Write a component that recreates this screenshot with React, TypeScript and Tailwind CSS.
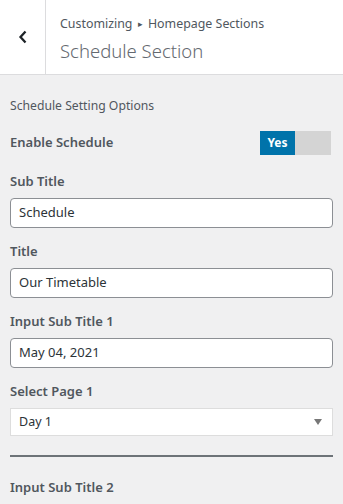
import React from "react";

const font = { fontFamily: '"Noto Sans", "Open Sans", sans-serif' };

function Field({ label, value }: { label: string; value: string }) {
  return (
    <div className="flex flex-col">
      <div className="text-[13px] font-semibold text-[#50575e] leading-[20px] mb-[7px]">{label}</div>
      <div className="h-[30px] rounded-[4px] border border-[#8c8f94] bg-white px-[8px] flex items-center text-[13px] text-[#2c3338]">
        {value}
      </div>
    </div>
  );
}

export default function App() {
  return (
    <div className="w-[343px] h-[504px] overflow-hidden bg-[#f0f0f1]" style={font}>
      <div className="h-[75px] bg-white border-b border-[#dcdcde] flex">
        <div className="w-[46px] border-r border-[#dcdcde] flex items-center justify-center">
          <svg width="10" height="14" viewBox="0 0 10 14">
            <path d="M7.5 1.5 L2.5 7 L7.5 12.5" fill="none" stroke="#1d2327" strokeWidth="2.3" />
          </svg>
        </div>
        <div className="flex flex-col pl-[14px] pt-[14px]">
          <div className="text-[12.4px] text-[#50575e] leading-[20px]">
            Customizing <span className="text-[9px] relative top-[-1px] mx-[2px]">▸</span> Homepage Sections
          </div>
          <div className="text-[18.5px] font-light text-[#646970] leading-[28px] mt-[2px]">Schedule Section</div>
        </div>
      </div>
      <div className="px-[10px] pt-[22px] flex flex-col">
        <div className="text-[12.2px] text-[#50575e] leading-[18px]">Schedule Setting Options</div>
        <div className="flex items-center justify-between mt-[16px]">
          <div className="text-[13px] font-semibold text-[#50575e]">Enable Schedule</div>
          <div className="flex w-[71px] h-[24px] mr-[2px]">
            <div className="w-[35px] bg-[#0073aa] text-white text-[12px] font-bold flex items-center justify-center">Yes</div>
            <div className="flex-1 bg-[#d4d4d4]" />
          </div>
        </div>
        <div className="mt-[16px] flex flex-col gap-[13px]">
          <Field label="Sub Title" value="Schedule" />
          <Field label="Title" value="Our Timetable" />
          <Field label="Input Sub Title 1" value="May 04, 2021" />
          <div className="flex flex-col">
            <div className="text-[13px] font-semibold text-[#50575e] leading-[20px] mb-[7px]">Select Page 1</div>
            <div className="h-[28px] border border-[#dddddd] bg-white px-[8px] flex items-center justify-between text-[12.5px] text-[#2c3338]">
              <span>Day 1</span>
              <svg width="8" height="6" viewBox="0 0 8 6" className="mr-[2px]">
                <path d="M0 0 H8 L4 6 Z" fill="#777" />
              </svg>
            </div>
          </div>
        </div>
        <div className="mt-[19px] h-[2px] bg-[#6d7378]" />
        <div className="mt-[20px] text-[13px] font-semibold text-[#50575e] leading-[20px]">Input Sub Title 2</div>
        <div className="mt-[7px] h-[30px] rounded-[4px] border border-[#8c8f94] bg-white" />
      </div>
    </div>
  );
}
